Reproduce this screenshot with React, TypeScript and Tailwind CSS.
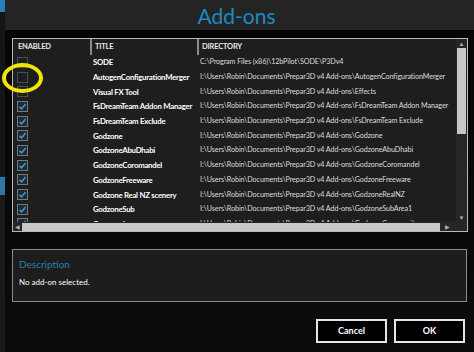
import React from 'react';

interface Addon {
  enabled: boolean;
  title: string;
  dir: string;
}

const base = 'I:\\Users\\Robin\\Documents\\Prepar3D v4 Add-ons\\';

const addons: Addon[] = [
  { enabled: false, title: 'SODE', dir: 'C:\\Program Files (x86)\\12bPilot\\SODE\\P3Dv4' },
  { enabled: false, title: 'AutogenConfigurationMerger', dir: base + 'AutogenConfigurationMerger' },
  { enabled: false, title: 'Visual FX Tool', dir: base + 'Effects' },
  { enabled: true, title: 'FsDreamTeam Addon Manager', dir: base + 'FsDreamTeam Addon Manager' },
  { enabled: true, title: 'FsDreamTeam Exclude', dir: base + 'FsDreamTeam Exclude' },
  { enabled: true, title: 'Godzone', dir: base + 'Godzone' },
  { enabled: true, title: 'GodzoneAbuDhabi', dir: base + 'GodzoneAbuDhabi' },
  { enabled: true, title: 'GodzoneCoromandel', dir: base + 'GodzoneCoromandel' },
  { enabled: true, title: 'GodzoneFreeware', dir: base + 'GodzoneFreeware' },
  { enabled: true, title: 'Godzone Real NZ scenery', dir: base + 'GodzoneRealNZ' },
  { enabled: true, title: 'GodzoneSub', dir: base + 'GodzoneSubArea1' },
  { enabled: true, title: 'Community', dir: base + 'GodzoneCommunity' },
];

function CheckBox({ checked }: { checked: boolean }) {
  return (
    <div
      className={`w-[11px] h-[11px] border flex items-center justify-center ${
        checked ? 'border-[#6f7a82] bg-[#1f2a33]' : 'border-[#4a4f54] bg-[#1b1d20]'
      }`}
    >
      {checked && (
        <svg width="9" height="9" viewBox="0 0 9 9">
          <path d="M1.5 4.8 L3.6 6.8 L7.6 2" stroke="#3f95c8" strokeWidth="1.6" fill="none" />
        </svg>
      )}
    </div>
  );
}

function Row({ addon }: { addon: Addon }) {
  return (
    <div className="flex items-center h-[14.7px] shrink-0 leading-[14px]">
      <div className="w-[77px] pl-[4px] shrink-0">
        <CheckBox checked={addon.enabled} />
      </div>
      <div className="w-[107px] pl-[3px] shrink-0 overflow-hidden whitespace-nowrap font-bold text-white text-[7.8px] tracking-[-0.25px]">
        {addon.title}
      </div>
      <div className="pl-[3px] whitespace-nowrap text-[#dcdcdc] text-[7.2px] tracking-[-0.1px]">{addon.dir}</div>
    </div>
  );
}

export default function App() {
  return (
    <div className="w-[474px] h-[352px] bg-black flex overflow-hidden relative font-['Lato','Open_Sans',sans-serif]">
      {/* desktop edge behind the dialog */}
      <div className="w-[5px] flex flex-col bg-[#151515] shrink-0">
        <div className="h-[12px] bg-[#2a7fb8]"></div>
        <div className="h-[165px]"></div>
        <div className="h-[18px] bg-[#2d78a8]"></div>
        <div className="flex-1 bg-[#1a1a1a]"></div>
      </div>

      <div className="flex-1 flex flex-col bg-gradient-to-b from-[#050505] to-[#0c0c0c]">
        <div className="h-[30px] bg-[#242424] flex items-center justify-center shrink-0">
          <span className="text-[21px] leading-none text-[#1c8ac4] -ml-[6px]">Add-ons</span>
        </div>

        {/* add-on list */}
        <div className="ml-[7px] mt-[8px] w-[456px] h-[194px] border border-[#b8b8b8] bg-[#1e1e1e] flex flex-col shrink-0">
          <div className="flex flex-1 min-h-0">
            <div className="flex-1 flex flex-col overflow-hidden leading-none">
              <div className="flex items-center h-[16px] shrink-0 font-bold text-[#e8e8e8] text-[7.5px] tracking-[-0.2px]">
                <div className="w-[77px] pl-[5px] shrink-0">ENABLED</div>
                <div className="w-[107px] h-full flex items-center pl-[3px] border-l-2 border-[#8a8a8a] shrink-0">TITLE</div>
                <div className="h-full flex items-center pl-[3px] border-l-2 border-[#8a8a8a]">DIRECTORY</div>
              </div>
              {addons.map((a) => (
                <Row key={a.title} addon={a} />
              ))}
            </div>
            {/* vertical scrollbar */}
            <div className="w-[11px] flex flex-col items-center shrink-0 bg-[#262626]">
              <div className="h-[9px] flex items-center justify-center text-[6px] text-[#b0b0b0]">▲</div>
              <div className="w-[9px] h-[86px] bg-[#c7c7c7]"></div>
              <div className="flex-1"></div>
              <div className="h-[9px] flex items-center justify-center text-[6px] text-[#b0b0b0]">▼</div>
            </div>
          </div>
          {/* horizontal scrollbar */}
          <div className="h-[9px] flex items-center shrink-0 bg-[#262626]">
            <div className="w-[9px] flex items-center justify-center text-[6px] text-[#b0b0b0]">◀</div>
            <div className="w-[418px] h-[8px] bg-[#c7c7c7]"></div>
            <div className="w-[14px] flex items-center justify-center text-[6px] text-[#b0b0b0]">▶</div>
          </div>
        </div>

        {/* description */}
        <div className="ml-[7px] mt-[17px] w-[455px] h-[53px] border border-[#8c8c8c] bg-[#1d1d1d] px-[6px] pt-[9px] shrink-0">
          <div className="text-[10px] leading-none text-[#2a7fae]">Description</div>
          <div className="mt-[9px] text-[8px] leading-none text-white">No add-on selected.</div>
        </div>

        <div className="flex justify-end gap-[7px] mr-[9px] mt-[17px]">
          <button className="w-[71px] h-[24px] border-2 border-[#e6e6e6] bg-black text-white text-[9px] font-bold">
            Cancel
          </button>
          <button className="w-[71px] h-[24px] border-2 border-[#e6e6e6] bg-black text-white text-[9px] font-bold">
            OK
          </button>
        </div>
      </div>

      {/* annotation circle */}
      <div className="absolute left-[2px] top-[63px] w-[41px] h-[30px] rounded-[50%] border-[4px] border-[#f2e600]"></div>
    </div>
  );
}
